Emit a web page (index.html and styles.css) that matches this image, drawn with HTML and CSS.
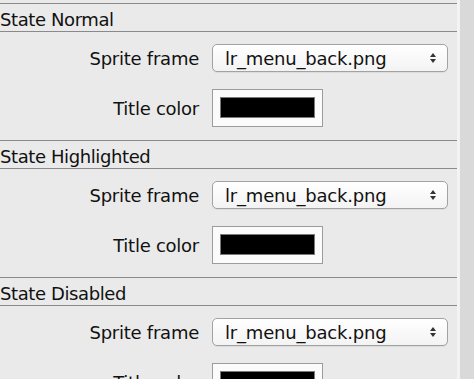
FILE: index.html
```html
<!DOCTYPE html>
<html>
<head>
<meta charset="utf-8">
<link rel="stylesheet" href="styles.css">
</head>
<body>
<div class="window">
  <div class="panel">
    <section class="group">
      <div class="group-head">State Normal</div>
      <div class="row row-sprite">
        <span class="label">Sprite frame</span>
        <div class="popup"><span class="popup-text">lr_menu_back.png</span><span class="arrows"><i class="up"></i><i class="down"></i></span></div>
      </div>
      <div class="row row-color">
        <span class="label">Title color</span>
        <div class="well"><div class="swatch"></div></div>
      </div>
    </section>
    <section class="group">
      <div class="group-head">State Highlighted</div>
      <div class="row row-sprite">
        <span class="label">Sprite frame</span>
        <div class="popup"><span class="popup-text">lr_menu_back.png</span><span class="arrows"><i class="up"></i><i class="down"></i></span></div>
      </div>
      <div class="row row-color">
        <span class="label">Title color</span>
        <div class="well"><div class="swatch"></div></div>
      </div>
    </section>
    <section class="group">
      <div class="group-head">State Disabled</div>
      <div class="row row-sprite">
        <span class="label">Sprite frame</span>
        <div class="popup"><span class="popup-text">lr_menu_back.png</span><span class="arrows"><i class="up"></i><i class="down"></i></span></div>
      </div>
      <div class="row row-color">
        <span class="label">Title color</span>
        <div class="well"><div class="swatch"></div></div>
      </div>
    </section>
  </div>
  <div class="scroller"></div>
</div>
</body>
</html>
```

FILE: styles.css
```css
html, body {
  margin: 0;
  padding: 0;
  height: 100%;
  overflow: hidden;
}
body {
  background: #e9e9e9;
  font-family: "DejaVu Sans", "Noto Sans", sans-serif;
  color: #111;
}
.window {
  display: flex;
  height: 379px;
}
.panel {
  width: 457px;
  padding-top: 3px;
  background: #eaeaea;
}
.scroller {
  flex: 1;
  border-left: 3px solid #f3f3f3;
  background: #d9d9d9;
}
.group {
  display: flex;
  flex-direction: column;
  padding-bottom: 13px;
}
.group-head {
  height: 26px;
  padding-top: 1px;
  border-top: 1px solid #8a8a8a;
  border-bottom: 1px solid #8a8a8a;
  font-size: 18px;
  line-height: 30px;
  letter-spacing: -0.4px;
  box-sizing: content-box;
}
.row {
  display: grid;
  grid-template-columns: 199px auto;
  column-gap: 13px;
  align-items: center;
}
.row-sprite {
  margin-top: 12px;
}
.row-color {
  margin-top: 17px;
}
.label {
  text-align: right;
  font-size: 18px;
  letter-spacing: -0.25px;
}
.popup {
  height: 26px;
  width: 211px;
  border: 1px solid #a2a2a2;
  border-radius: 5px;
  background: linear-gradient(#ffffff, #f3f3f3);
  box-shadow: 0 1px 0 rgba(0,0,0,0.06);
  display: flex;
  align-items: center;
  justify-content: space-between;
  padding-left: 12px;
  padding-right: 11px;
  box-sizing: content-box;
}
.popup-text {
  font-size: 18px;
  letter-spacing: -0.2px;
}
.arrows {
  display: flex;
  flex-direction: column;
  gap: 2px;
}
.arrows i {
  display: block;
  width: 0;
  height: 0;
  border-left: 3px solid transparent;
  border-right: 3px solid transparent;
}
.arrows .up {
  border-bottom: 4px solid #333;
}
.arrows .down {
  border-top: 4px solid #333;
}
.well {
  width: 111px;
  height: 38px;
  border: 1px solid #9c9c9c;
  background: #fbfbfb;
  padding: 7px 7px 8px 7px;
  box-sizing: border-box;
}
.swatch {
  height: 100%;
  background: #000;
  border: 1px solid #7a7a7a;
  box-sizing: border-box;
}
```
